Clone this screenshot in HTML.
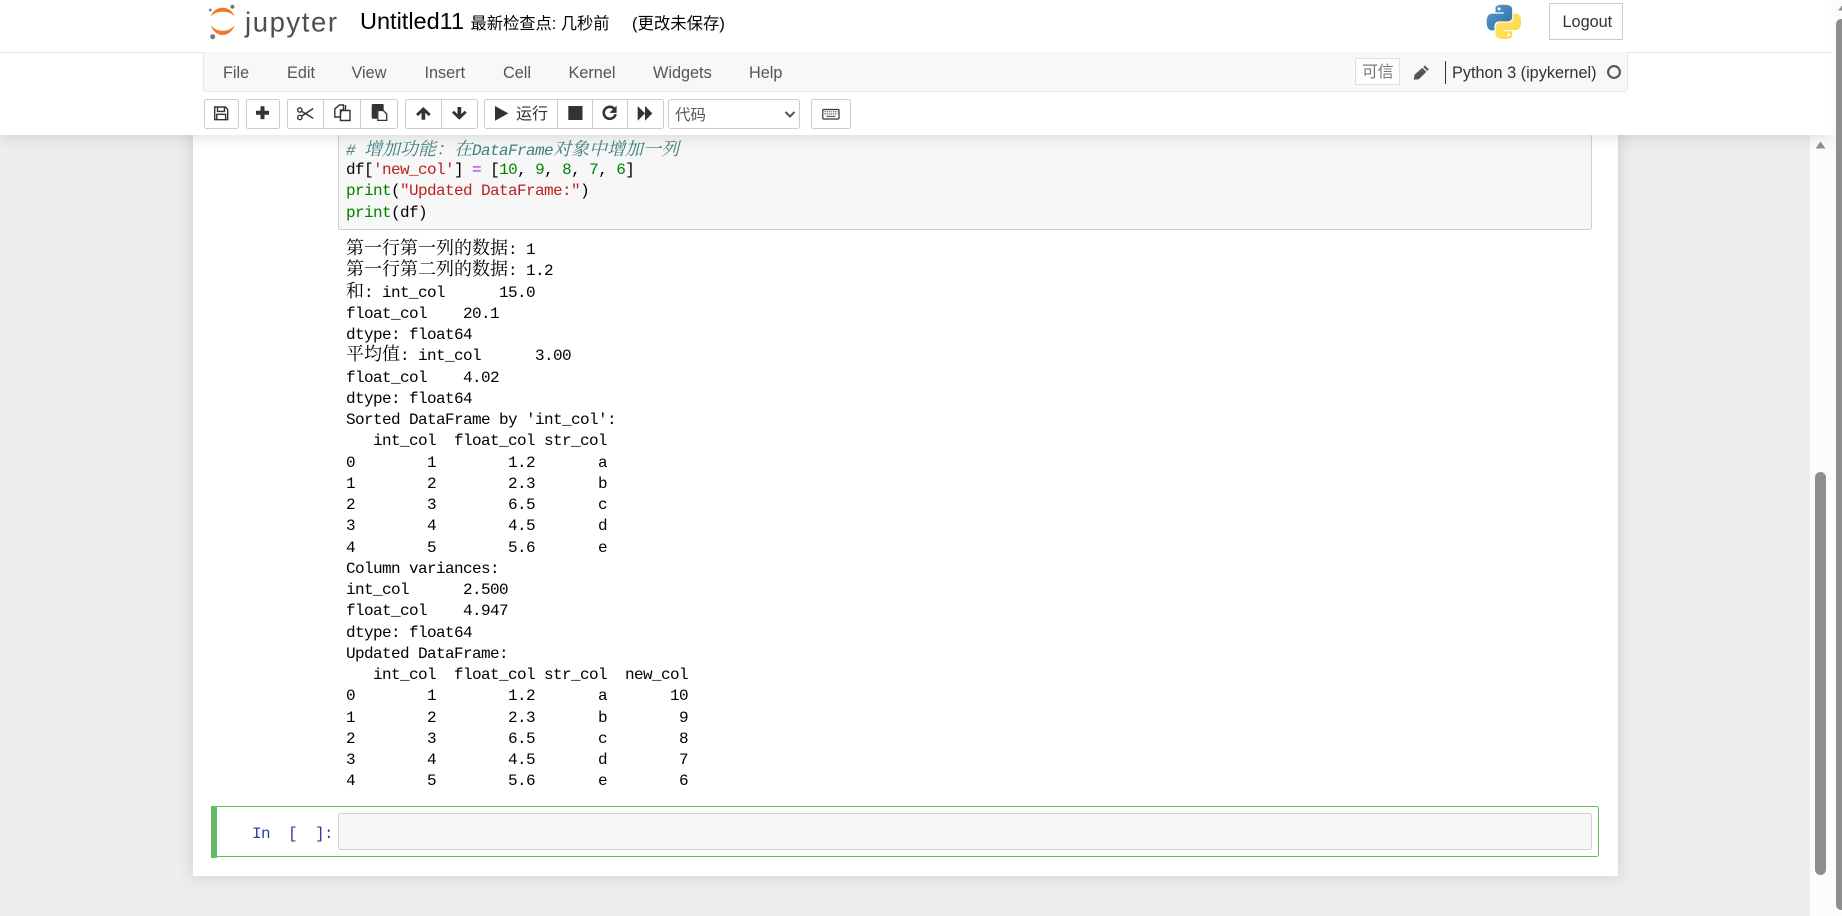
<!DOCTYPE html>
<html lang="zh">
<head>
<meta charset="utf-8">
<title>Untitled11 - Jupyter Notebook</title>
<style>
html,body{margin:0;padding:0;width:1842px;height:916px;overflow:hidden;background:#eee;font-family:"Liberation Sans","Noto Sans CJK SC",sans-serif;color:#000}
.a{position:absolute;box-sizing:border-box}
.t{position:absolute;white-space:pre;line-height:1}
#container{left:193px;top:0;width:1425px;height:876px;background:#fff;box-shadow:0 0 15px 1px rgba(87,87,87,.2)}
#header{left:0;top:0;width:1831px;height:135px;background:#fff;box-shadow:0 0 15px 1px rgba(87,87,87,.2);z-index:5}
#hline{left:0;top:52px;width:1831px;height:1px;background:#e7e7e7}
#menu{left:203px;top:52px;width:1425px;height:40px;background:#f8f8f8;border:1px solid #e7e7e7;border-top:none;border-radius:0 0 3px 3px}
.m{font-size:16.25px;color:#555;top:65px}
.b{border:1px solid #ccc;background:#fff;border-radius:2.5px;top:99px;height:30px}
.s{top:99px;width:1px;height:30px;background:#ccc;position:absolute}
.code{font-family:"Liberation Mono",monospace;font-size:16px;letter-spacing:-.6px;position:absolute;left:346px;height:21.25px;line-height:21.25px;white-space:pre;color:#000;margin-top:1.5px}
.code i{font-family:"Noto Serif CJK SC",serif;font-size:18px;letter-spacing:0;font-style:normal;line-height:0}
.cm,.cm i{font-style:italic;color:#408080}
.g{color:#008000}.r{color:#BA2121}.p{color:#AA22FF}
</style>
</head>
<body>
<div class="a" id="container"></div>

<div class="a" style="left:338px;top:-20px;width:1254px;height:249.5px;background:#f7f7f7;border:1px solid #cfcfcf;border-radius:2.5px"></div>

<div class="code cm" style="top:139.4px"># <i>增加功能：在</i>DataFrame<i>对象中增加一列</i></div>
<div class="code" style="top:158.6px">df[<span class="r">'new_col'</span>] <span class="p">=</span> [<span class="g">10</span>, <span class="g">9</span>, <span class="g">8</span>, <span class="g">7</span>, <span class="g">6</span>]</div>
<div class="code" style="top:179.9px"><span class="g">print</span>(<span class="r">"Updated DataFrame:"</span>)</div>
<div class="code" style="top:201.1px"><span class="g">print</span>(df)</div>

<div class="code" style="top:238.7px"><i>第一行第一列的数据</i>: 1</div>
<div class="code" style="top:259.95px"><i>第一行第二列的数据</i>: 1.2</div>
<div class="code" style="top:281.2px"><i>和</i>: int_col      15.0</div>
<div class="code" style="top:302.45px">float_col    20.1</div>
<div class="code" style="top:323.7px">dtype: float64</div>
<div class="code" style="top:344.95px"><i>平均值</i>: int_col      3.00</div>
<div class="code" style="top:366.2px">float_col    4.02</div>
<div class="code" style="top:387.45px">dtype: float64</div>
<div class="code" style="top:408.7px">Sorted DataFrame by 'int_col':</div>
<div class="code" style="top:429.95px">   int_col  float_col str_col</div>
<div class="code" style="top:451.2px">0        1        1.2       a</div>
<div class="code" style="top:472.45px">1        2        2.3       b</div>
<div class="code" style="top:493.7px">2        3        6.5       c</div>
<div class="code" style="top:514.95px">3        4        4.5       d</div>
<div class="code" style="top:536.2px">4        5        5.6       e</div>
<div class="code" style="top:557.45px">Column variances:</div>
<div class="code" style="top:578.7px">int_col      2.500</div>
<div class="code" style="top:599.95px">float_col    4.947</div>
<div class="code" style="top:621.2px">dtype: float64</div>
<div class="code" style="top:642.45px">Updated DataFrame:</div>
<div class="code" style="top:663.7px">   int_col  float_col str_col  new_col</div>
<div class="code" style="top:684.95px">0        1        1.2       a       10</div>
<div class="code" style="top:706.2px">1        2        2.3       b        9</div>
<div class="code" style="top:727.45px">2        3        6.5       c        8</div>
<div class="code" style="top:748.7px">3        4        4.5       d        7</div>
<div class="code" style="top:769.95px">4        5        5.6       e        6</div>

<div class="a" style="left:211px;top:806px;width:1388px;height:51px;border:1px solid #66bb6a;border-radius:2.5px"></div>
<div class="a" style="left:211px;top:806px;width:6px;height:52px;background:#66bb6a"></div>
<div class="a" style="left:338px;top:813px;width:1254px;height:37px;background:#f7f7f7;border:1px solid #cfcfcf;border-radius:2.5px"></div>
<div class="code" style="left:252px;top:822px;color:#303F9F">In  [  ]:</div>

<div class="a" style="left:1810px;top:135px;width:32px;height:781px;background:#fcfcfc"></div>
<div class="a" style="left:1815px;top:472px;width:11px;height:403px;background:#8e8e8e;border-radius:5.5px"></div>
<svg class="a" style="left:1810px;top:135px" width="21" height="20"><path d="M10.5 6.5l5 7h-10z" fill="#8e8e8e"/></svg>

<div class="a" id="header">
  <div class="a" id="hline"></div>
  <div class="a" id="menu"></div>
  <div class="t m" style="left:223px">File</div>
  <div class="t m" style="left:287px">Edit</div>
  <div class="t m" style="left:351.5px">View</div>
  <div class="t m" style="left:424.5px">Insert</div>
  <div class="t m" style="left:503px">Cell</div>
  <div class="t m" style="left:568.5px">Kernel</div>
  <div class="t m" style="left:653px">Widgets</div>
  <div class="t m" style="left:749px">Help</div>

  <div class="t" style="left:360px;top:10px;font-size:23.5px;color:#000">Untitled11</div>
  <div class="t" style="left:470.5px;top:16px;font-size:16.25px;color:#000">最新检查点: 几秒前</div>
  <div class="t" style="left:632px;top:16px;font-size:16.4px;color:#000">(更改未保存)</div>

  <div class="a" style="left:1549px;top:3px;width:74px;height:37px;border:1px solid #ccc;background:#fff"></div>
  <div class="t" style="left:1562.5px;top:14px;font-size:16.25px;color:#333">Logout</div>

  <div class="a" style="left:1355px;top:58px;width:45px;height:27px;border:1px solid #e0e0e0;background:#fff"></div>
  <div class="t" style="left:1362px;top:65px;font-size:15.8px;color:#777">可信</div>
  <div class="a" style="left:1444.5px;top:61px;width:1px;height:23px;background:#333"></div>
  <div class="t" style="left:1452px;top:65px;font-size:16.25px;color:#333">Python 3 (ipykernel)</div>

  <div class="a b" style="left:203.5px;width:35px"></div>
  <div class="a b" style="left:245.5px;width:34px"></div>
  <div class="a b" style="left:286.5px;width:111px"></div>
  <div class="s" style="left:323px"></div><div class="s" style="left:360px"></div>
  <div class="a b" style="left:405px;width:72.5px"></div>
  <div class="s" style="left:441px"></div>
  <div class="a b" style="left:484px;width:179.5px"></div>
  <div class="s" style="left:557px"></div><div class="s" style="left:592px"></div><div class="s" style="left:627px"></div>
  <div class="t" style="left:516px;top:106.5px;font-size:16px;color:#333">运行</div>
  <div class="a b" style="left:668px;width:131.5px;border-radius:3px"></div>
  <div class="t" style="left:675px;top:107.5px;font-size:15.5px;color:#555">代码</div>
  <div class="a b" style="left:811px;width:40px"></div>

  <svg class="a" style="left:0;top:0" width="1842" height="135" viewBox="0 0 1842 135">
    <defs>
      <linearGradient id="pb" x1="0" y1="0" x2="1" y2="1"><stop offset="0" stop-color="#5a9fd4"/><stop offset="1" stop-color="#306998"/></linearGradient>
      <linearGradient id="py" x1="0" y1="0" x2="1" y2="1"><stop offset="0" stop-color="#ffe873"/><stop offset="1" stop-color="#ffd43b"/></linearGradient>
    </defs>
    <!-- jupyter logo -->
    <path d="M210.5 16.5C213 10.5 217.5 7.7 222.7 7.7S232.4 10.5 234.9 16.5C231.5 13 227.5 11.7 222.7 11.7S214 13 210.5 16.5Z" fill="#f37726"/>
    <path d="M210.5 25C213 31.5 217.5 35 222.7 35S232.4 31.5 234.9 25C231.5 29.2 227.5 30.8 222.7 30.8S214 29.2 210.5 25Z" fill="#f37726"/>
    <circle cx="232.4" cy="6.8" r="2" fill="#767677"/>
    <circle cx="210.3" cy="10" r="1.4" fill="#767677"/>
    <circle cx="212.7" cy="36.7" r="2.5" fill="#767677"/>
    <text x="245" y="31.5" font-family="Liberation Sans, sans-serif" font-size="27.5" fill="#4e4e4e" textLength="92">jupyter</text>
    <!-- python logo -->
    <g transform="translate(1486.7 4.7) scale(1.43)">
      <path fill="url(#pb)" d="M14.25.18l.9.2.73.26.59.3.45.32.34.34.25.34.16.33.1.3.04.26.02.2-.01.13V8.5l-.05.63-.13.55-.21.46-.26.38-.3.31-.33.25-.35.19-.35.14-.33.1-.3.07-.26.04-.21.02H8.77l-.69.05-.59.14-.5.22-.41.27-.33.32-.27.35-.2.36-.15.37-.1.35-.07.32-.04.27-.02.21v3.06H3.17l-.21-.03-.28-.07-.32-.12-.35-.18-.36-.26-.36-.36-.35-.46-.32-.59-.28-.73-.21-.88-.14-1.05-.05-1.23.06-1.22.16-1.04.24-.87.32-.71.36-.57.4-.44.42-.33.42-.24.4-.16.36-.1.32-.05.24-.01h.16l.06.01h8.16v-.83H6.18l-.01-2.75-.02-.37.05-.34.11-.31.17-.28.25-.26.31-.23.38-.2.44-.18.51-.15.58-.12.64-.1.71-.06.77-.04.84-.02 1.27.05zm-6.3 1.98l-.23.33-.08.41.08.41.23.34.33.22.41.09.41-.09.33-.22.23-.34.08-.41-.08-.41-.23-.33-.33-.22-.41-.09-.41.09z"/>
      <path fill="url(#py)" d="M21.04 6.11l.28.06.32.12.35.18.36.27.36.35.35.47.32.59.28.73.21.88.14 1.04.05 1.23-.06 1.23-.16 1.04-.24.86-.32.71-.36.57-.4.45-.42.33-.42.24-.4.16-.36.09-.32.05-.24.02-.16-.01h-8.22v.82h5.84l.01 2.76.02.36-.05.34-.11.31-.17.29-.25.25-.31.24-.38.2-.44.17-.51.15-.58.13-.64.09-.71.07-.77.04-.84.01-1.27-.04-1.07-.14-.9-.2-.73-.25-.59-.3-.45-.33-.34-.34-.25-.34-.16-.33-.1-.3-.04-.25-.02-.2.01-.13v-5.34l.05-.64.13-.54.21-.46.26-.38.3-.32.33-.24.35-.2.35-.14.33-.1.3-.06.26-.04.21-.02.13-.01h5.84l.69-.05.59-.14.5-.21.41-.28.33-.32.27-.35.2-.36.15-.36.1-.35.07-.32.04-.28.02-.21V6.07h2.09l.14.01zm-6.47 14.25l-.23.33-.08.41.08.41.23.33.33.23.41.08.41-.08.33-.23.23-.33.08-.41-.08-.41-.23-.33-.33-.23-.41-.08-.41.08z"/>
    </g>
    <!-- pencil -->
    <path d="M1424.8 65.4l4 4-1.5 1.6-4-4zM1422.3 67.9l4 4-7.5 7.3-5 .6.7-5z" fill="#555"/>
    <!-- kernel idle -->
    <circle cx="1614" cy="72" r="5.9" fill="none" stroke="#555" stroke-width="2.1"/>
    <!-- save -->
    <g fill="none" stroke="#333" stroke-width="1.4">
      <path d="M214.7 107h10.6l2.4 2.4v10.3h-13z"/>
      <path d="M217.5 107v4.4h7v-4.4"/>
      <path d="M216.8 119.7v-5.4h8.8v5.4"/>
    </g>
    <!-- plus -->
    <path d="M260.5 106.3h4v4.4h4.5v4h-4.5v4.4h-4v-4.4H256v-4h4.5z" fill="#333"/>
    <!-- cut -->
    <g fill="none" stroke="#333" stroke-width="1.4">
      <circle cx="299.8" cy="110" r="2.2"/>
      <circle cx="299.8" cy="117.5" r="2.2"/>
      <path d="M301.8 111.4l11.4 7M301.8 116l11.4-7.5"/>
    </g>
    <!-- copy -->
    <g fill="#fff" stroke="#333" stroke-width="1.4">
      <path d="M339.5 105h4v5h-3v7h-5.7v-8z"/>
      <path d="M341.5 110.5h4.5l4 0v10h-9.5v-7z"/>
      <path d="M345.5 105v5.5" fill="none"/>
    </g>
    <!-- paste -->
    <path d="M371.7 105a1 1 0 0 1 1-1h10a1 1 0 0 1 1 1v5h-6.5v8.8h-4.5a1 1 0 0 1-1-1z" fill="#333"/>
    <path d="M377.8 110.5h5.5l3.4 3.4v6.5h-8.9z" fill="#fff" stroke="#333" stroke-width="1.3"/>
    <!-- up / down -->
    <path d="M423.3 107l7.4 7-2 2.1-3.5-3.4v7.1h-3.7v-7.1l-3.5 3.4-2-2.1z" fill="#333"/>
    <path d="M459.3 119.8l7.4-7-2-2.1-3.5 3.4V107h-3.7v7.1l-3.5-3.4-2 2.1z" fill="#333"/>
    <!-- play -->
    <path d="M495 106v14.7l13.3-7.3z" fill="#333"/>
    <!-- stop -->
    <rect x="568.3" y="106" width="14.2" height="14" fill="#333"/>
    <!-- restart -->
    <path d="M614.4 109a6 6 0 1 0 1.2 5.2" fill="none" stroke="#333" stroke-width="2.6"/>
    <path d="M616.6 105.7v7.2h-7.2z" fill="#333"/>
    <!-- fast forward -->
    <path d="M637.7 106v14.7l7.3-7.3zM645 106v14.7l7.3-7.3z" fill="#333"/>
    <!-- select chevron -->
    <path d="M785.5 112l4.5 4.5 4.5-4.5" fill="none" stroke="#555" stroke-width="2"/>
    <!-- keyboard -->
    <rect x="822.8" y="109.5" width="16.2" height="9.5" rx="1" fill="#fff" stroke="#333" stroke-width="1.2"/>
    <path d="M824.5 111.7h13M824.5 113.9h13" stroke="#666" stroke-width="1.2" stroke-dasharray="1.3 .8"/>
    <path d="M826.5 116.4h9" stroke="#666" stroke-width="1.3"/>
  </svg>
</div>

<div class="a" style="left:1831px;top:0;width:11px;height:135px;background:#fcfcfc;z-index:6"></div>
<svg class="a" style="left:1831px;top:0;z-index:7" width="11" height="916">
  <path d="M11 5.5l-4 5h4z" fill="#8e8e8e"/>
  <path d="M11 19h-1a5 5 0 0 0-5 5v881a5 5 0 0 0 5 5h1z" fill="#8e8e8e"/>
</svg>
</body>
</html>
